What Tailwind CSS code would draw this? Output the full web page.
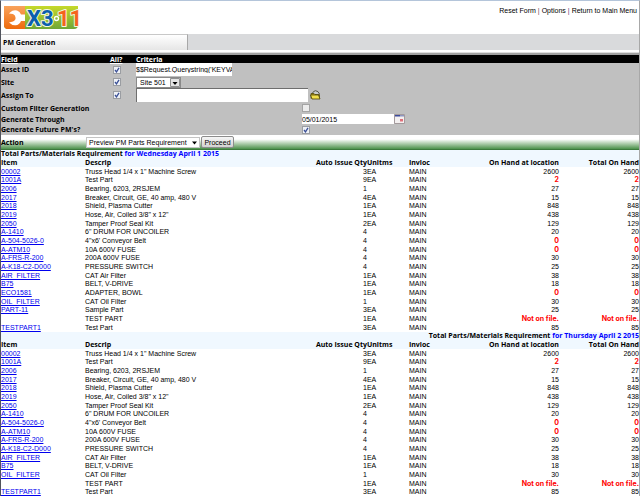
<!DOCTYPE html>
<html lang="en">
<head>
<meta charset="utf-8">
<meta name="viewport" content="width=device-width, initial-scale=1">
<title>PM Generation</title>
<script src="https://cdn.jsdelivr.net/npm/@tailwindcss/browser@4"></script>
</head>
<body class="bg-white font-['Liberation_Sans',Arial,sans-serif] text-[7px] leading-[9px] text-black">
<svg class="hidden"><symbol id="tick" viewBox="0 0 8 8"><path d="M2 4L3.500 5.800L6 1.800" fill="none" stroke="#3a4f96" stroke-width="1.300"/></symbol></svg>
<div class="min-h-screen border-t border-r border-l border-t-[#b4c5da] border-r-[#a8a8a8] border-l-[#50535c]">
  <header class="flex h-[33px] items-start justify-between pr-[2px] pl-[3px]">
    <svg class="mt-[5px] h-[23px] w-[74px] overflow-visible" viewBox="0 0 74 23" role="img" aria-label="X3-11">
      <defs>
        <linearGradient id="lime" x1="0" y1="0" x2="0" y2="1"><stop offset="0" stop-color="#c6d92a"/><stop offset="1" stop-color="#6fa636"/></linearGradient>
        <linearGradient id="amber" x1="0" y1="0" x2="0" y2="1"><stop offset="0" stop-color="#f9a35c"/><stop offset="1" stop-color="#ee6a0c"/></linearGradient>
      </defs>
      <path d="M0 0H74V19Q74 23 70 23H4Q0 23 0 19Z" fill="url(#lime)"/>
      <path d="M0 0H21V23H4Q0 23 0 19Z" fill="url(#amber)"/>
      <path d="M6 6.500Q9 3.500 13 4.500Q16 5.500 17 8.500H21V15H17Q15.500 19 11.500 19.300Q8 19.500 5 16.500L9 15.500Q12 14 11.500 11.500Q11.500 9 9 8L5 7.500Z" fill="#fff"/>
      <g font-family="Roboto, Liberation Sans, sans-serif" font-weight="700" paint-order="stroke" stroke="#f4f8e0" stroke-width="2" stroke-linejoin="round">
        <text x="23" y="20" font-size="22" fill="#0b5fae">X3</text>
        <text x="53" y="20" font-size="22" fill="#f4641c" class="stroke-[#f4f8e0]">11</text>
      </g>
      <circle cx="52.500" cy="12.500" r="2" fill="#8dbb3a" stroke="#fff" stroke-width="1.400"/>
    </svg>
    <nav class="flex gap-[2px] pt-[5px] text-[7px]">
      <a href="#">Reset Form</a><span class="text-[#7a3b4d]">|</span>
      <a href="#">Options</a><span class="text-[#6b2a6b]">|</span>
      <a href="#">Return to Main Menu</a>
    </nav>
  </header>

  <div class="flex h-4 bg-[#d9dadc]">
    <h1 class="w-[187px] border-t border-r border-t-[#c8c8c8] border-r-[#a8a8a8] bg-linear-to-b from-white to-[#e6e6e6] pl-[2px] font-['Open_Sans',sans-serif] leading-[15px] font-bold">PM Generation</h1>
  </div>
  <div class="mt-[2px] h-[3px] border-t border-[#dcdcdc] bg-[#a0a0a0]"></div>

  <form>
    <div class="flex h-2 items-center bg-black font-['Open_Sans',sans-serif] font-bold text-white">
      <span class="w-[109px] underline">Field</span><span class="w-[26px] underline">All?</span><span>Criteria</span>
    </div>
    <div class="bg-[#c0c0c0] [&_label]:font-['Open_Sans',sans-serif] [&_label]:font-bold">
      <div class="flex h-[13px] items-center">
        <label for="asset" class="w-[112px]">Asset ID</label>
        <span class="grid w-[23px] justify-items-start *:[grid-area:1/1]"><input type="checkbox" checked aria-label="All assets" class="size-2 appearance-none border border-[#9a9da2] bg-[#eef1f6]"><svg class="pointer-events-none size-2"><use href="#tick"/></svg></span>
        <input id="asset" value="$$Request.Querystring('KEYVALUE')" class="h-[13px] w-[96px] bg-white">
      </div>
      <div class="flex h-3 items-center">
        <label for="site" class="w-[112px]">Site</label>
        <span class="grid w-[23px] justify-items-start *:[grid-area:1/1]"><input type="checkbox" checked aria-label="All sites" class="size-2 appearance-none border border-[#9a9da2] bg-[#eef1f6]"><svg class="pointer-events-none size-2"><use href="#tick"/></svg></span>
        <span class="relative flex">
          <select id="site" class="h-[11px] w-[45px] appearance-none border border-[#8a8a8a] bg-white pl-[3px]"><option>Site 501</option></select>
          <svg class="pointer-events-none absolute top-px right-px h-[9px] w-[10px]" viewBox="0 0 10 9"><path d="M.5.5h9v8h-9z" fill="#e4e4e4" stroke="#909090"/><path d="M2.500 4h5L5 7z"/></svg>
        </span>
      </div>
      <div class="flex h-[14px] items-center">
        <label for="assign" class="w-[112px]">Assign To</label>
        <span class="grid w-[23px] justify-items-start *:[grid-area:1/1]"><input type="checkbox" checked aria-label="All assignees" class="size-2 appearance-none border border-[#9a9da2] bg-[#eef1f6]"><svg class="pointer-events-none size-2"><use href="#tick"/></svg></span>
        <input id="assign" class="h-[14px] w-[172px] border-t border-l border-[#6e6e6e] bg-white">
        <button type="button" aria-label="Browse" class="ml-[2px]">
          <svg class="h-[10px] w-[11px]" viewBox="0 0 11 10"><path d="M2 4Q3 1 5.500.7Q8.500 1 9.500 4" fill="#c8ccd0" stroke="#55584a"/><path d="M1 8.500V3.500H4L5 4.500H9.500V8.500" fill="#b59a10" stroke="#4a420a" stroke-width=".7"/><path d="M.5 5H8.500L10 9H2Z" fill="#f2e04a" stroke="#4a420a" stroke-width=".8"/></svg>
        </button>
      </div>
      <div class="flex h-3 items-center">
        <label for="custom" class="w-[301px]">Custom Filter Generation</label>
        <input id="custom" type="checkbox" class="size-2 appearance-none border border-[#a4a4a4] bg-[#ececec]">
      </div>
      <div class="flex h-[10px] items-center">
        <label for="through" class="w-[301px]">Generate Through</label>
        <input id="through" value="05/01/2015" class="h-[10px] w-[92px] bg-white">
        <button type="button" aria-label="Pick a date">
          <svg class="h-[10px] w-[11px]" viewBox="0 0 11 10"><path d="M.5.500h10v9H.5z" fill="#f3f0f0" stroke="#a39a9c"/><path d="M1 1h5v1.500H1z" fill="#3c4c9c"/><path d="M6 1h4v1.500H6z" fill="#8e96c0"/><path d="M6 5h3v2.500H6z" fill="#e0707a"/></svg>
        </button>
      </div>
      <div class="flex h-[11px] items-center">
        <label for="future" class="w-[301px]">Generate Future PM's?</label>
        <span class="grid justify-items-start *:[grid-area:1/1]"><input id="future" type="checkbox" checked class="size-2 appearance-none border border-[#9a9da2] bg-[#eef1f6]"><svg class="pointer-events-none size-2"><use href="#tick"/></svg></span>
      </div>
    </div>
    <div class="flex h-[15px] items-center border-b border-[#3c7a3c] bg-linear-to-b from-white from-30% to-[#4b914b]">
      <label for="action" class="w-[85px] font-['Open_Sans',sans-serif] font-bold">Action</label>
      <span class="relative flex">
        <select id="action" class="h-[11px] w-[114px] appearance-none border border-[#c4c4c4] bg-white pl-[2px]"><option>Preview PM Parts Requirement</option></select>
        <svg class="pointer-events-none absolute top-[4px] right-[3px] h-[4px] w-[5px]" viewBox="0 0 5 4"><path d="M0 .5h5L2.500 3.500z"/></svg>
      </span>
      <button type="submit" class="ml-px h-3 w-[33px] rounded-xs border border-[#8c8c8c] bg-linear-to-b from-[#f6f6f6] to-[#d2d2d2] text-[7px] leading-[9px]">Proceed</button>
    </div>
  </form>

  <table class="w-full table-fixed border-collapse whitespace-nowrap [&_td]:p-0 [&_th]:p-0 [&_th]:font-['Open_Sans',sans-serif] [&_tr]:h-[9px] [&_tr]:leading-[9px] [&_tr:nth-child(3n+1)]:h-[8px] [&_tr:nth-child(3n+1)]:leading-[8px]">
    <colgroup><col class="w-[84px]"><col><col class="w-[60px]"><col class="w-[42px]"><col class="w-[50px]"><col class="w-[100px]"><col class="w-[80px]"></colgroup>
    <tbody id="rows"></tbody>
  </table>
</div>

<script>
const parts = [
  ['00002', 'Truss Head 1/4 x 1" Machine Screw', '3', 'EA', '2600'],
  ['1001A', 'Test Part', '9', 'EA', '2', 1],
  ['2006', 'Bearing, 6203, 2RSJEM', '1', '', '27'],
  ['2017', 'Breaker, Circuit, GE, 40 amp, 480 V', '4', 'EA', '15'],
  ['2018', 'Shield, Plasma Cutter', '1', 'EA', '848'],
  ['2019', 'Hose, Air, Coiled 3/8" x 12"', '1', 'EA', '438'],
  ['2050', 'Tamper Proof Seal Kit', '2', 'EA', '129'],
  ['A-1410', '6" DRUM FOR UNCOILER', '4', '', '20'],
  ['A-504-5026-0', '4"x6\' Conveyor Belt', '4', '', '0', 1],
  ['A-ATM10', '10A 600V FUSE', '4', '', '0', 1],
  ['A-FRS-R-200', '200A 600V FUSE', '4', '', '30'],
  ['A-K18-C2-D000', 'PRESSURE SWITCH', '4', '', '25'],
  ['AIR_FILTER', 'CAT Air Filter', '1', 'EA', '38'],
  ['B75', 'BELT, V-DRIVE', '1', 'EA', '18'],
  ['ECO1581', 'ADAPTER, BOWL', '1', 'EA', '0', 1],
  ['OIL_FILTER', 'CAT Oil Filter', '1', '', '30'],
  ['PART-11', 'Sample Part', '3', 'EA', '25'],
  ['', 'TEST PART', '1', 'EA', 'Not on file.', 1],
  ['TESTPART1', 'Test Part', '3', 'EA', '85']
];
const row = ([item, desc, qty, unit, stock, short]) => {
  const c = short ? 'text-right font-[Inter,sans-serif] font-bold text-[#ff0000]' : 'text-right';
  return `<tr><td>${item ? `<a href="#" class="text-[#0000ee] underline">${item}</a>` : ''}</td><td>${desc}</td><td class="text-right">${qty}</td><td>${unit}</td><td>MAIN</td><td class="${c}">${stock}</td><td class="${c}">${stock}</td></tr>`;
};
const day = (date, align, list) =>
  `<tr class="bg-[#f0f8ff]"><th colspan="7" class="${align}">Total Parts/Materials Requirement <span class="text-[#0000ff]">for ${date}</span></th></tr>
   <tr class="bg-[#f0f8ff] text-left"><th>Item</th><th>Descrip</th><th><div class="flex justify-end">Auto Issue Qty</div></th><th>Unitms</th><th>Invloc</th><th class="text-right">On Hand at location</th><th class="text-right">Total On Hand</th></tr>` +
  list.map(row).join('');
document.getElementById('rows').innerHTML =
  day('Wednesday April 1 2015', 'text-left', parts) +
  day('Thursday April 2 2015', 'text-right', parts.filter(p => p[0] !== 'ECO1581' && p[0] !== 'PART-11'));
</script>
</body>
</html>
